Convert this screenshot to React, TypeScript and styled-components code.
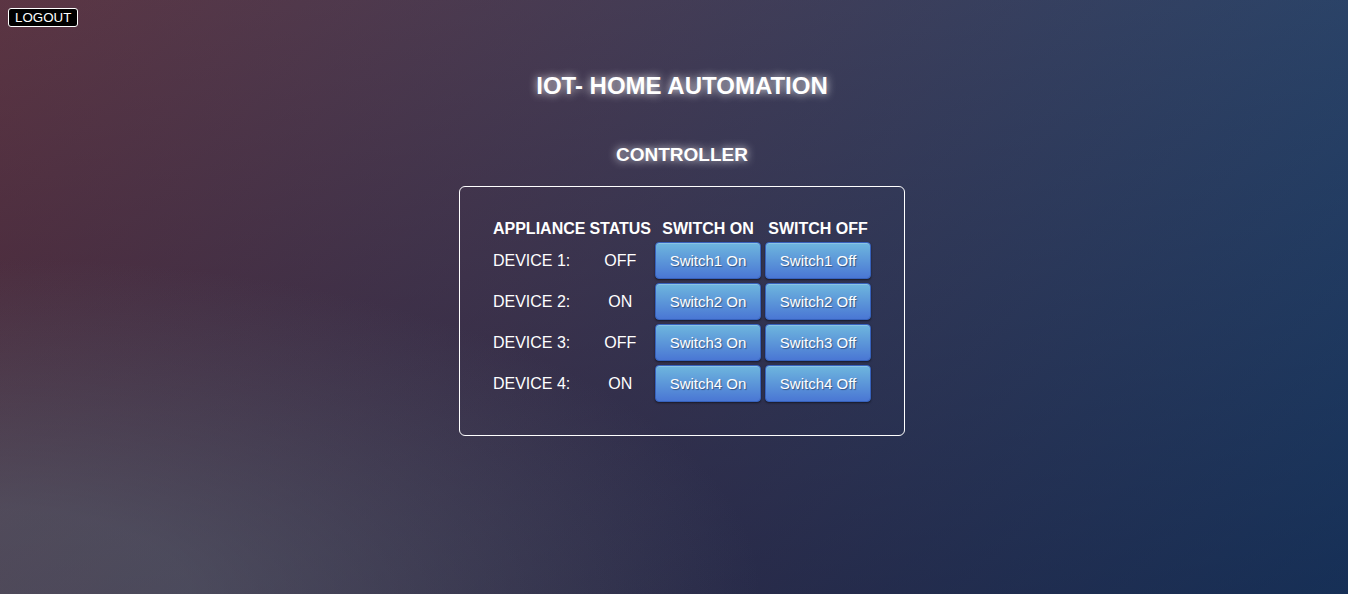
import styled, { createGlobalStyle } from "styled-components";

const GlobalStyle = createGlobalStyle`
  html {
    height: 100%;
  }
  body {
    margin: 8px;
    font-family: "Liberation Sans", Arial, sans-serif;
    color: #ffffff;
    background: radial-gradient(ellipse farthest-corner at 0% 100%, rgba(104, 128, 138, 0.4) 10%, rgba(138, 114, 76, 0) 40%),
      linear-gradient(to bottom, rgba(57, 173, 219, 0.25) 0%, rgba(42, 60, 87, 0.4) 100%),
      linear-gradient(135deg, #670d10 0%, #092756 100%);
    background-attachment: fixed;
  }
`;

const TopBar = styled.div`
  display: flex;
`;

const LogoutButton = styled.button`
  font-family: "Liberation Sans", Arial, sans-serif;
  font-size: 13.33px;
  height: 19px;
  padding: 0 6px;
  color: #ffffff;
  background: #000000;
  border: 1px solid #ffffff;
  border-radius: 3px;
  cursor: pointer;
`;

const Main = styled.main`
  padding-left: 16px;
`;

const Title = styled.h1`
  margin: 45px 0 0;
  font-size: 24px;
  line-height: 28px;
  font-weight: bold;
  text-align: center;
  text-shadow: 0 0 9px rgba(255, 255, 255, 0.9);
`;

const SubTitle = styled.h3`
  margin: 44px 0 0;
  font-size: 19px;
  line-height: 22px;
  font-weight: bold;
  text-align: center;
  text-shadow: 0 0 9px rgba(255, 255, 255, 0.9);
`;

const Panel = styled.div`
  width: fit-content;
  margin: 20px auto 0;
  padding: 30px;
  border: 1px solid #ffffff;
  border-radius: 6px;
`;

const Table = styled.table`
  border-spacing: 2px;
  font-size: 16px;
`;

const HeadCell = styled.th`
  padding: 1px;
  height: 18px;
  line-height: 18px;
  font-weight: bold;
  text-align: center;
  white-space: nowrap;
`;

const Cell = styled.td<{ $center?: boolean }>`
  padding: 1px;
  text-align: ${(p) => (p.$center ? "center" : "left")};
  white-space: nowrap;
`;

const SwitchButton = styled.button`
  width: 106px;
  height: 37px;
  padding: 0;
  font-family: "Liberation Sans", Arial, sans-serif;
  font-size: 15px;
  color: #ffffff;
  text-shadow: 1px 1px 1px rgba(0, 0, 0, 0.4);
  background-color: #4a77d4;
  background-image: linear-gradient(to bottom, #6eb6de, #4a77d4);
  border: 1px solid #3762bc;
  border-radius: 4px;
  box-shadow: inset 0 1px 0 rgba(255, 255, 255, 0.2), 0 1px 2px rgba(0, 0, 0, 0.5);
  cursor: pointer;
`;

const devices = [
  { id: 1, status: "OFF" },
  { id: 2, status: "ON" },
  { id: 3, status: "OFF" },
  { id: 4, status: "ON" },
];

export default function App() {
  return (
    <>
      <GlobalStyle />
      <TopBar>
        <LogoutButton>LOGOUT</LogoutButton>
      </TopBar>
      <Main>
        <Title>IOT- HOME AUTOMATION</Title>
        <SubTitle>CONTROLLER</SubTitle>
        <Panel>
          <Table>
            <thead>
              <tr>
                <HeadCell>APPLIANCE</HeadCell>
                <HeadCell>STATUS</HeadCell>
                <HeadCell>SWITCH ON</HeadCell>
                <HeadCell>SWITCH OFF</HeadCell>
              </tr>
            </thead>
            <tbody>
              {devices.map((d) => (
                <tr key={d.id}>
                  <Cell>{`DEVICE ${d.id}:`}</Cell>
                  <Cell $center>{d.status}</Cell>
                  <Cell>
                    <SwitchButton>{`Switch${d.id} On`}</SwitchButton>
                  </Cell>
                  <Cell>
                    <SwitchButton>{`Switch${d.id} Off`}</SwitchButton>
                  </Cell>
                </tr>
              ))}
            </tbody>
          </Table>
        </Panel>
      </Main>
    </>
  );
}
